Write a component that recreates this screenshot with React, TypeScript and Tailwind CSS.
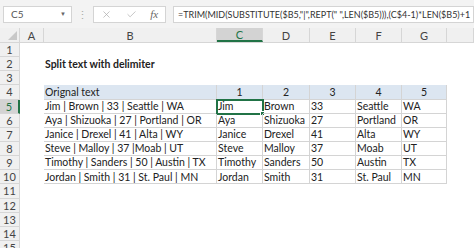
import { X, Check } from "lucide-react";

const cols = ["A", "B", "C", "D", "E", "F", "G", ""];
const widths = "grid-cols-[20px_24px_173px_46px_47px_46px_46px_45px_1fr]";

const rows = [
  ["Jim | Brown | 33 | Seattle | WA", "Jim", "Brown", "33", "Seattle", "WA"],
  ["Aya | Shizuoka | 27 | Portland | OR", "Aya", "Shizuoka", "27", "Portland", "OR"],
  ["Janice | Drexel | 41 | Alta | WY", "Janice", "Drexel", "41", "Alta", "WY"],
  ["Steve | Malloy | 37 |Moab | UT", "Steve", "Malloy", "37", "Moab", "UT"],
  ["Timothy | Sanders | 50 | Austin | TX", "Timothy", "Sanders", "50", "Austin", "TX"],
  ["Jordan | Smith | 31 | St. Paul | MN", "Jordan", "Smith", "31", "St. Paul", "MN"],
];

const RowHead = ({ n, active }: { n: number; active?: boolean }) => (
  <div
    className={`flex items-center justify-center border-r border-b border-[#d6d6d6] text-[11px] ${
      active ? "bg-[#d3d3d3] text-[#217346] border-r-2 border-r-[#217346]" : "bg-[#f0f0f0] text-[#444]"
    }`}
  >
    {n}
  </div>
);

const Blank = () => <div />;

export default function App() {
  return (
    <div className="w-[474px] h-[248px] overflow-hidden bg-white text-[10.5px] leading-none text-[#222]" style={{ fontFamily: "Lato, sans-serif" }}>
      {/* Formula bar */}
      <div className="h-[28px] bg-[#f3f3f3] flex items-center pl-[3px]">
        <div className="w-[69px] h-[17px] bg-white border border-[#d4d4d4] flex items-center justify-between pl-[7px] pr-[5px] text-[10px] text-[#555]">
          <span>C5</span>
          <span className="text-[6px] text-[#666]">▼</span>
        </div>
        <div className="w-[21px] flex justify-center text-[#aaa] text-[11px]">⋮</div>
        <div className="w-[73px] h-[17px] bg-white border border-[#d4d4d4] flex items-center justify-around text-[#aaa]">
          <X size={11} strokeWidth={1.5} />
          <Check size={11} strokeWidth={1.5} />
          <span className="italic text-[#666] text-[11px]" style={{ fontFamily: "'Liberation Serif', serif" }}>fx</span>
        </div>
        <div className="ml-[7px] flex-1 h-[17px] bg-white border border-[#d4d4d4] flex items-center pl-[4px] text-[9px] text-[#333] whitespace-nowrap overflow-hidden">
          =TRIM(MID(SUBSTITUTE($B5,"|",REPT(" ",LEN($B5))),(C$4-1)*LEN($B5)+1
        </div>
      </div>

      {/* Column headers */}
      <div className={`grid ${widths} h-[15px] bg-[#f0f0f0] border-b border-[#d6d6d6] text-[#444] text-[11px]`}>
        <div className="border-r border-[#d6d6d6] relative">
          <div className="absolute right-[2px] bottom-[2px] w-0 h-0 border-l-[9px] border-l-transparent border-b-[9px] border-b-[#c8c8c8]" />
        </div>
        {cols.map((c, i) => (
          <div
            key={i}
            className={`flex items-center justify-center border-r border-[#d6d6d6] ${
              c === "C" ? "bg-[#d3d3d3] text-[#217346] border-b-2 border-b-[#217346]" : ""
            }`}
          >
            {c}
          </div>
        ))}
      </div>

      {/* Rows */}
      {[1, 2, 3].map((n) => (
        <div key={n} className={`grid ${widths} h-[14.15px]`}>
          <RowHead n={n} />
          <Blank />
          {n === 2 ? (
            <div className="flex items-center pl-[1px] font-bold whitespace-nowrap">Split text with delimiter</div>
          ) : (
            <Blank />
          )}
        </div>
      ))}

      {/* Table header row 4 */}
      <div className={`grid ${widths} h-[14.15px]`}>
        <RowHead n={4} />
        <Blank />
        <div className="bg-[#dce6f1] border-r border-b border-[#d4d4d4] flex items-center pl-[1px] overflow-hidden">Orignal text</div>
        {[1, 2, 3, 4, 5].map((k) => (
          <div key={k} className="bg-[#dce6f1] border-r border-b border-[#d4d4d4] flex items-center justify-center">
            {k}
          </div>
        ))}
      </div>

      {rows.map((r, i) => (
        <div key={i} className={`grid ${widths} h-[14.15px]`}>
          <RowHead n={i + 5} active={i === 0} />
          <Blank />
          {r.map((v, j) => (
            <div
              key={j}
              className={`relative min-w-0 flex items-center pl-[1px] border-r border-b border-[#d4d4d4] whitespace-nowrap ${
                i === 0 && j === 1 ? "outline-2 outline-[#217346] -outline-offset-1" : "overflow-hidden"
              }`}
            >
              {v}
              {i === 0 && j === 1 && (
                <div className="absolute -right-[3px] -bottom-[3px] w-[5px] h-[5px] bg-[#217346] border border-white" />
              )}
            </div>
          ))}
        </div>
      ))}

      {[11, 12, 13, 14, 15].map((n) => (
        <div key={n} className={`grid ${widths} h-[14.15px]`}>
          <RowHead n={n} />
        </div>
      ))}
    </div>
  );
}
